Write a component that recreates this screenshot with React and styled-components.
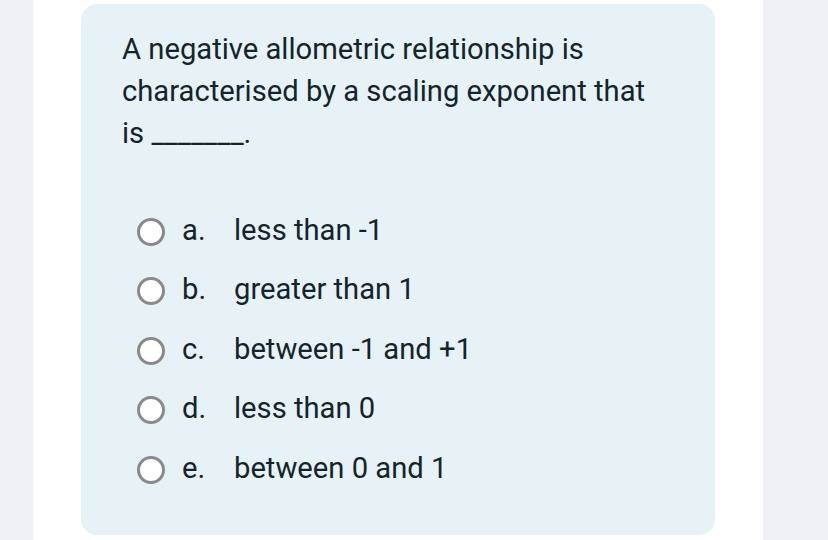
import React from "react";
import styled, { createGlobalStyle } from "styled-components";

const Global = createGlobalStyle`
  html, body { margin: 0; padding: 0; background: #eff1f5; }
  body { font-family: Roboto, "Noto Sans", sans-serif; }
`;

const Page = styled.div`
  display: flex;
  justify-content: flex-start;
  height: 540px;
  overflow: hidden;
`;

const Column = styled.main`
  margin-left: 33px;
  width: 730px;
  background: #ffffff;
  padding: 4px 48px 0 48px;
  box-sizing: border-box;
`;

const Card = styled.section`
  background: #e6f2f5;
  border-radius: 16px;
  width: 634px;
  height: 531px;
  box-sizing: border-box;
  padding: 24px 55px 0 41px;
`;

const Question = styled.p`
  margin: 0;
  font-size: 29.2px;
  line-height: 42px;
  color: #13252b;
`;

const Options = styled.ul`
  list-style: none;
  margin: 46px 0 0 0;
  padding: 0 0 0 15px;
  display: flex;
  flex-direction: column;
`;

const Option = styled.li`
  display: flex;
  align-items: center;
  height: 59.5px;
  font-size: 29.2px;
  color: #13252b;
`;

const Radio = styled.span`
  width: 22px;
  height: 22px;
  border-radius: 50%;
  border: 3px solid #8a8a8a;
  background: #ffffff;
  flex: none;
  margin-right: 17px;
  margin-top: 4px;
`;

const Letter = styled.span`
  width: 52px;
  flex: none;
`;

const Label = styled.span``;

const options = [
  ["a.", "less than -1"],
  ["b.", "greater than 1"],
  ["c.", "between -1 and +1"],
  ["d.", "less than 0"],
  ["e.", "between 0 and 1"],
];

export default function App() {
  return (
    <>
      <Global />
      <Page>
        <Column>
          <Card>
            <Question>
              A negative allometric relationship is characterised by a scaling
              exponent that is _______.
            </Question>
            <Options>
              {options.map(([l, t]) => (
                <Option key={l}>
                  <Radio />
                  <Letter>{l}</Letter>
                  <Label>{t}</Label>
                </Option>
              ))}
            </Options>
          </Card>
        </Column>
      </Page>
    </>
  );
}
